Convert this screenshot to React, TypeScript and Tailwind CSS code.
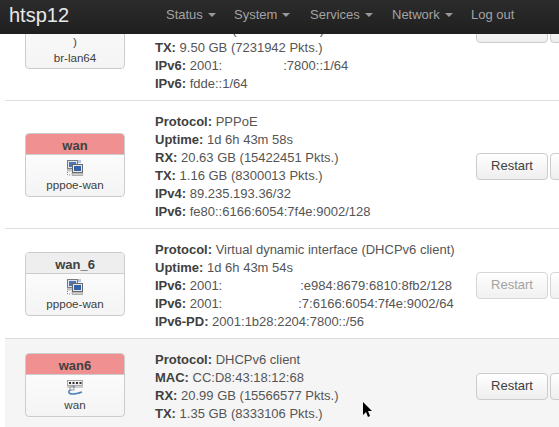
const font = { fontFamily: '"Liberation Sans", Arial, sans-serif' };

function NavItem({ label, caret = true }: { label: string; caret?: boolean }) {
  return (
    <span className="flex items-center text-[13px] text-[#a3a3a3]">
      {label}
      {caret && <span className="ml-[5px] mt-[1px] h-0 w-0 border-x-[4px] border-t-[4px] border-x-transparent border-t-[#999999]" />}
    </span>
  );
}

function PppoeIcon() {
  return (
    <svg width="16" height="16" viewBox="0 0 16 16" className="block">
      <rect x="0.5" y="0.5" width="10" height="8" fill="#dfe4ec" stroke="#7a7a7a" />
      <rect x="2" y="2" width="7" height="5" fill="#4a76b8" />
      <rect x="0" y="9" width="11" height="2" fill="#d8d8d8" stroke="#8a8a8a" strokeWidth="0.5" />
      <rect x="11" y="0" width="3" height="3" fill="#b5c6e0" />
      <rect x="5.5" y="4.5" width="10" height="8" fill="#e6e9ef" stroke="#666666" />
      <rect x="7" y="6" width="7" height="5" fill="#2f62a8" />
      <rect x="5" y="13" width="11" height="2.5" fill="#cfcfcf" stroke="#777777" strokeWidth="0.5" />
      <path d="M0.5 12v4M2 15h2" stroke="#5b86c4" strokeDasharray="1 1" />
    </svg>
  );
}

function WanIcon() {
  return (
    <svg width="16" height="16" viewBox="0 0 16 16" className="block">
      <rect x="0.5" y="0.5" width="15" height="5" fill="#eeeeee" stroke="#888888" strokeWidth="0.7" />
      <path d="M2 2h2v2H2zM5.5 2h2v2h-2zM9 2h2v2H9zM12.5 2h2v2h-2z" fill="#333333" />
      <path d="M0 7h16" stroke="#a0a0a0" />
      <path d="M7 6c-1 4-3 3-5 5-1 2 1 3 4 3 3 0 6-1 9-2" fill="none" stroke="#4d82c4" strokeWidth="1.6" />
      <rect x="3" y="7" width="4" height="3" fill="#f4f4f4" stroke="#666666" strokeWidth="0.6" />
    </svg>
  );
}

function Card({ name, sub, red, icon, extra, shift }: { name: string; sub: string; red?: boolean; icon: React.ReactNode; extra?: boolean; shift?: boolean }) {
  return (
    <div className={`w-[100px] shrink-0 overflow-hidden rounded-[4px] border border-[#cccccc] bg-gradient-to-b from-white to-[#f4f4f4] ${shift ? "mt-[2px]" : ""}`}>
      <div className={`h-[21px] border-b border-[#cccccc] text-center text-[13px] font-bold leading-[24px] text-[#404040] ${red ? "bg-[#f09090]" : "bg-[#eeeeee]"}`}>{name}</div>
      <div className={`flex flex-col items-center text-[11.6px] leading-[16px] text-[#404040] ${extra ? "h-[57px] pt-[3px]" : "h-[41px] pt-[5px]"}`}>
        {extra ? (
          <>
            <div className="h-[20px] leading-[14px]">(</div>
            <div className="leading-[16px]">)</div>
          </>
        ) : (
          icon
        )}
        <div className={extra ? "" : "mt-[1px]"}>{sub}</div>
      </div>
    </div>
  );
}

function Line({ label, value, gap, rest }: { label: string; value: string; gap?: number; rest?: string }) {
  return (
    <div className="h-[18px] whitespace-nowrap leading-[18px]">
      <strong className="font-bold text-[#404040]">{label}</strong> {value}
      {gap !== undefined && <span className="inline-block" style={{ width: gap }} />}
      {rest}
    </div>
  );
}

function Row({ children, card, disabled, alt, first }: { children: React.ReactNode; card: React.ReactNode; disabled?: boolean; alt?: boolean; first?: boolean }) {
  return (
    <div className={`flex w-[600px] items-center pb-[7px] pl-[20px] pt-[12px] ${first ? "" : "border-t border-[#dddddd]"} ${alt ? "bg-[#f5f5f5]" : "bg-white"}`}>
      <div className="-mt-[1px] mb-[3px] flex shrink-0 flex-col">{card}</div>
      <div className="ml-[30px] w-[321px] shrink-0 text-[13px] text-[#555555]">{children}</div>
      <div className="-mt-[1px] mb-[1px] flex shrink-0 gap-[2px]">
        {["Restart", "Stop"].map((t) => (
          <button
            key={t}
            className={`h-[27px] w-[72px] rounded-[4px] border border-[#cccccc] bg-gradient-to-b from-white to-[#eeeeee] text-[13px] ${disabled ? "text-[#8c8c8c] opacity-80" : "text-[#404040]"}`}
          >
            {t}
          </button>
        ))}
      </div>
    </div>
  );
}

export default function App() {
  return (
    <div style={font} className="relative h-[427px] w-[559px] overflow-hidden bg-white">
      <div className="absolute inset-x-0 top-0 z-10 flex h-[34px] items-center bg-gradient-to-b from-[#2c2c2c] to-[#1f1f1f] pb-[5px] pl-[9px]">
        <span className="w-[157px] text-[20px] text-[#e8e8e8]">htsp12</span>
        <div className="w-[68px]"><NavItem label="Status" /></div>
        <div className="w-[76px]"><NavItem label="System" /></div>
        <div className="w-[82px]"><NavItem label="Services" /></div>
        <div className="w-[79px]"><NavItem label="Network" /></div>
        <NavItem label="Log out" caret={false} />
      </div>
      <div className="-mt-[45px] ml-[5px]">
        <Row first card={<Card name="lan64" sub="br-lan64" extra shift icon={null} />}>
          <Line label="Protocol:" value="Static address" />
          <Line label="Uptime:" value="1d 6h 45m 10s" />
          <Line label="MAC:" value="CC:D8:43:18:12:68" />
          <Line label="RX:" value="9.12 GB (6914402 Pkts.)" />
          <Line label="TX:" value="9.50 GB (7231942 Pkts.)" />
          <Line label="IPv6:" value="2001:" gap={61} rest=":7800::1/64" />
          <Line label="IPv6:" value="fdde::1/64" />
        </Row>
        <Row card={<Card name="wan" sub="pppoe-wan" red icon={<PppoeIcon />} />}>
          <Line label="Protocol:" value="PPPoE" />
          <Line label="Uptime:" value="1d 6h 43m 58s" />
          <Line label="RX:" value="20.63 GB (15422451 Pkts.)" />
          <Line label="TX:" value="1.16 GB (8300013 Pkts.)" />
          <Line label="IPv4:" value="89.235.193.36/32" />
          <Line label="IPv6:" value="fe80::6166:6054:7f4e:9002/128" />
        </Row>
        <Row disabled card={<Card name="wan_6" sub="pppoe-wan" icon={<PppoeIcon />} />}>
          <Line label="Protocol:" value="Virtual dynamic interface (DHCPv6 client)" />
          <Line label="Uptime:" value="1d 6h 43m 54s" />
          <Line label="IPv6:" value="2001:" gap={78} rest=":e984:8679:6810:8fb2/128" />
          <Line label="IPv6:" value="2001:" gap={76} rest=":7:6166:6054:7f4e:9002/64" />
          <Line label="IPv6-PD:" value="2001:1b28:2204:7800::/56" />
        </Row>
        <Row alt card={<Card name="wan6" sub="wan" red icon={<WanIcon />} />}>
          <Line label="Protocol:" value="DHCPv6 client" />
          <Line label="MAC:" value="CC:D8:43:18:12:68" />
          <Line label="RX:" value="20.99 GB (15566577 Pkts.)" />
          <Line label="TX:" value="1.35 GB (8333106 Pkts.)" />
        </Row>
      </div>
      <svg width="12" height="18" viewBox="0 0 12 18" className="absolute left-[362px] top-[401px] z-20">
        <path d="M1 1v13l3-3 2 5 2-1-2-5h4z" fill="#000000" />
      </svg>
    </div>
  );
}
